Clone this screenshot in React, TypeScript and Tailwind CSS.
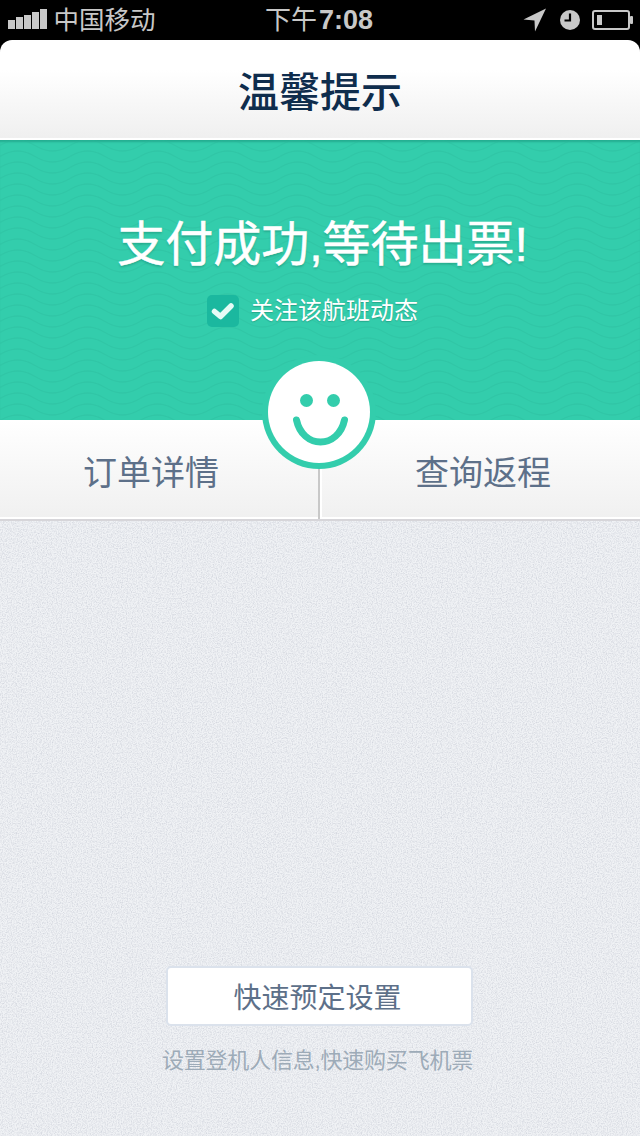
import React from 'react';

const FONT = 'font-["Liberation_Sans","Noto_Sans_CJK_SC",sans-serif]';

const StatusBar = () => (
  <div className="flex h-10 items-center justify-between bg-black text-[#c8c8c8] relative">
    <div className="flex items-center">
      <div className="mb-[2px] ml-2 flex items-end gap-[1.5px]">
        <span className="h-[9px] w-[6.5px] bg-[#c8c8c8]" />
        <span className="h-[12px] w-[6.5px] bg-[#c8c8c8]" />
        <span className="h-[14px] w-[6.5px] bg-[#c8c8c8]" />
        <span className="h-[17px] w-[6.5px] bg-[#c8c8c8]" />
        <span className="h-[20px] w-[6.5px] bg-[#c8c8c8]" />
      </div>
      <span className="ml-[7px] text-[25.5px] leading-10">中国移动</span>
    </div>
    <div className="absolute left-[265px] top-0 flex items-baseline leading-10">
      <span className="text-[26px]">下午</span>
      <span className="ml-[2px] text-[27px] font-bold">7:08</span>
    </div>
    <div className="flex items-center">
      <svg width="24" height="24" viewBox="0 0 24 24" className="mr-[13px]">
        <path d="M23 0.5 L0.5 11.5 L11.5 12.5 L12 23.5 Z" fill="#c8c8c8" />
      </svg>
      <svg width="20" height="20" viewBox="0 0 20 20" className="mr-[12px]">
        <circle cx="10" cy="10" r="10" fill="#c8c8c8" />
        <path d="M10 3.5 V10.5 H4.5" fill="none" stroke="#000" strokeWidth="2.2" />
      </svg>
      <svg width="42" height="20" viewBox="0 0 42 20" className="mr-[6px]">
        <rect x="1" y="1" width="36" height="18" rx="2" fill="none" stroke="#c8c8c8" strokeWidth="2" />
        <rect x="5" y="5" width="5" height="10" fill="#c8c8c8" />
        <rect x="38" y="6" width="3" height="8" rx="1" fill="#c8c8c8" />
      </svg>
    </div>
  </div>
);

const Waves = () => (
  <svg className="absolute inset-0 h-full w-full" aria-hidden="true">
    <defs>
      <pattern id="waves" width="70" height="11" patternUnits="userSpaceOnUse">
        <g fill="none" stroke="#27b899" strokeOpacity="0.3" strokeWidth="1.3">
          <path d="M0 5.5 C12 -2 23 -2 35 5.5 S58 13 70 5.5" />
          <path d="M0 -5.5 C12 -13 23 -13 35 -5.5 S58 2 70 -5.5" />
          <path d="M0 16.5 C12 9 23 9 35 16.5 S58 24 70 16.5" />
        </g>
      </pattern>
    </defs>
    <rect width="100%" height="100%" fill="url(#waves)" />
  </svg>
);

const Smiley = () => (
  <div className="absolute left-[262px] top-[215px] flex h-[114px] w-[114px] items-center justify-center rounded-full bg-[#33cdac]">
    <div className="mb-[1px] flex h-[102px] w-[102px] items-center justify-center rounded-full bg-white">
      <svg width="102" height="102" viewBox="0 0 102 102">
        <circle cx="38.5" cy="39.5" r="6.5" fill="#33cdac" />
        <circle cx="65.5" cy="39.5" r="6.5" fill="#33cdac" />
        <path
          d="M28.5 59 C31.5 73 41.5 81 52.5 81 C63.5 81 73.5 73 76.5 59"
          fill="none"
          stroke="#33cdac"
          strokeWidth="7"
          strokeLinecap="round"
        />
      </svg>
    </div>
  </div>
);

const ActionButton = ({ label, className }: { label: string; className: string }) => (
  <button
    className={`w-[318px] shrink-0 bg-gradient-to-b from-white to-[#f0f0f0] pt-[6px] text-[34px] leading-none text-[#5d7089] shadow-[inset_0_-2px_0_#fff] ${className}`}
  >
    {label}
  </button>
);

const Noise = () => (
  <svg className="absolute inset-0 h-full w-full" aria-hidden="true">
    <filter id="grain" colorInterpolationFilters="sRGB">
      <feTurbulence type="fractalNoise" baseFrequency="0.8" numOctaves="2" seed="4" />
      <feColorMatrix values="0 0 0 0 0.66  0 0 0 0 0.68  0 0 0 0 0.74  0.8 0 0 0 -0.3" />
    </filter>
    <rect width="100%" height="100%" filter="url(#grain)" />
  </svg>
);

const App = () => {
  return (
    <div className={`${FONT} flex h-[1136px] w-[640px] flex-col overflow-hidden bg-black`}>
      <StatusBar />
      <header className="flex h-[100px] items-center justify-center rounded-t-[12px] bg-gradient-to-b from-white from-30% to-[#efefef] pt-[6px] shadow-[inset_0_-2px_0_#fff]">
        <h1 className="text-[41px] font-medium leading-none text-[#0f2d4d]">温馨提示</h1>
      </header>
      <div className="relative">
        <section className="relative flex h-[280px] flex-col items-center bg-[#33cdac] shadow-[inset_0_3px_2px_-1px_#25ad91]">
          <Waves />
          <h2 className="relative ml-[5px] mt-[78px] whitespace-nowrap text-[48px] leading-[54px] text-white [-webkit-text-stroke:0.5px_white] [text-shadow:0_2px_2px_rgba(0,80,60,0.25)]">
            支付成功,等待出票!
          </h2>
          <label className="relative mr-[15px] mt-[22px] flex items-center">
            <span className="flex h-8 w-8 items-center justify-center rounded-[5px] bg-[#1bb89f]">
              <svg width="24" height="20" viewBox="0 0 24 20">
                <path
                  d="M3.5 10.5 L9.5 15.5 L20 5"
                  fill="none"
                  stroke="#e6fbf6"
                  strokeWidth="5.5"
                  strokeLinecap="round"
                  strokeLinejoin="round"
                />
              </svg>
            </span>
            <span className="ml-[11px] pt-[1px] text-[24px] leading-8 text-white [text-shadow:0_1px_1px_rgba(0,80,60,0.3)]">
              关注该航班动态
            </span>
          </label>
        </section>
        <div className="flex h-[101px] border-b-2 border-[#d6d5d9]">
          <ActionButton label="订单详情" className="pr-[16px]" />
          <div className="w-[2px] bg-[#c8c8c8]" />
          <div className="w-[2px] bg-white" />
          <ActionButton label="查询返程" className="pl-[4px]" />
        </div>
        <Smiley />
      </div>
      <main className="relative flex flex-1 flex-col items-center justify-end bg-[#f0f2f5] pb-[60px]">
        <Noise />
        <button className="relative mr-[1px] h-[60px] w-[307px] rounded-[5px] border-2 border-[#dbe2ec] bg-white pr-[4px] pt-[6px] text-[28px] text-[#5d7089]">
          快速预定设置
        </button>
        <p className="relative mr-[5px] mt-[20px] text-[22px] leading-[30px] tracking-[-0.2px] text-[#9dabb8]">
          设置登机人信息,快速购买飞机票
        </p>
      </main>
    </div>
  );
};

export default App;
